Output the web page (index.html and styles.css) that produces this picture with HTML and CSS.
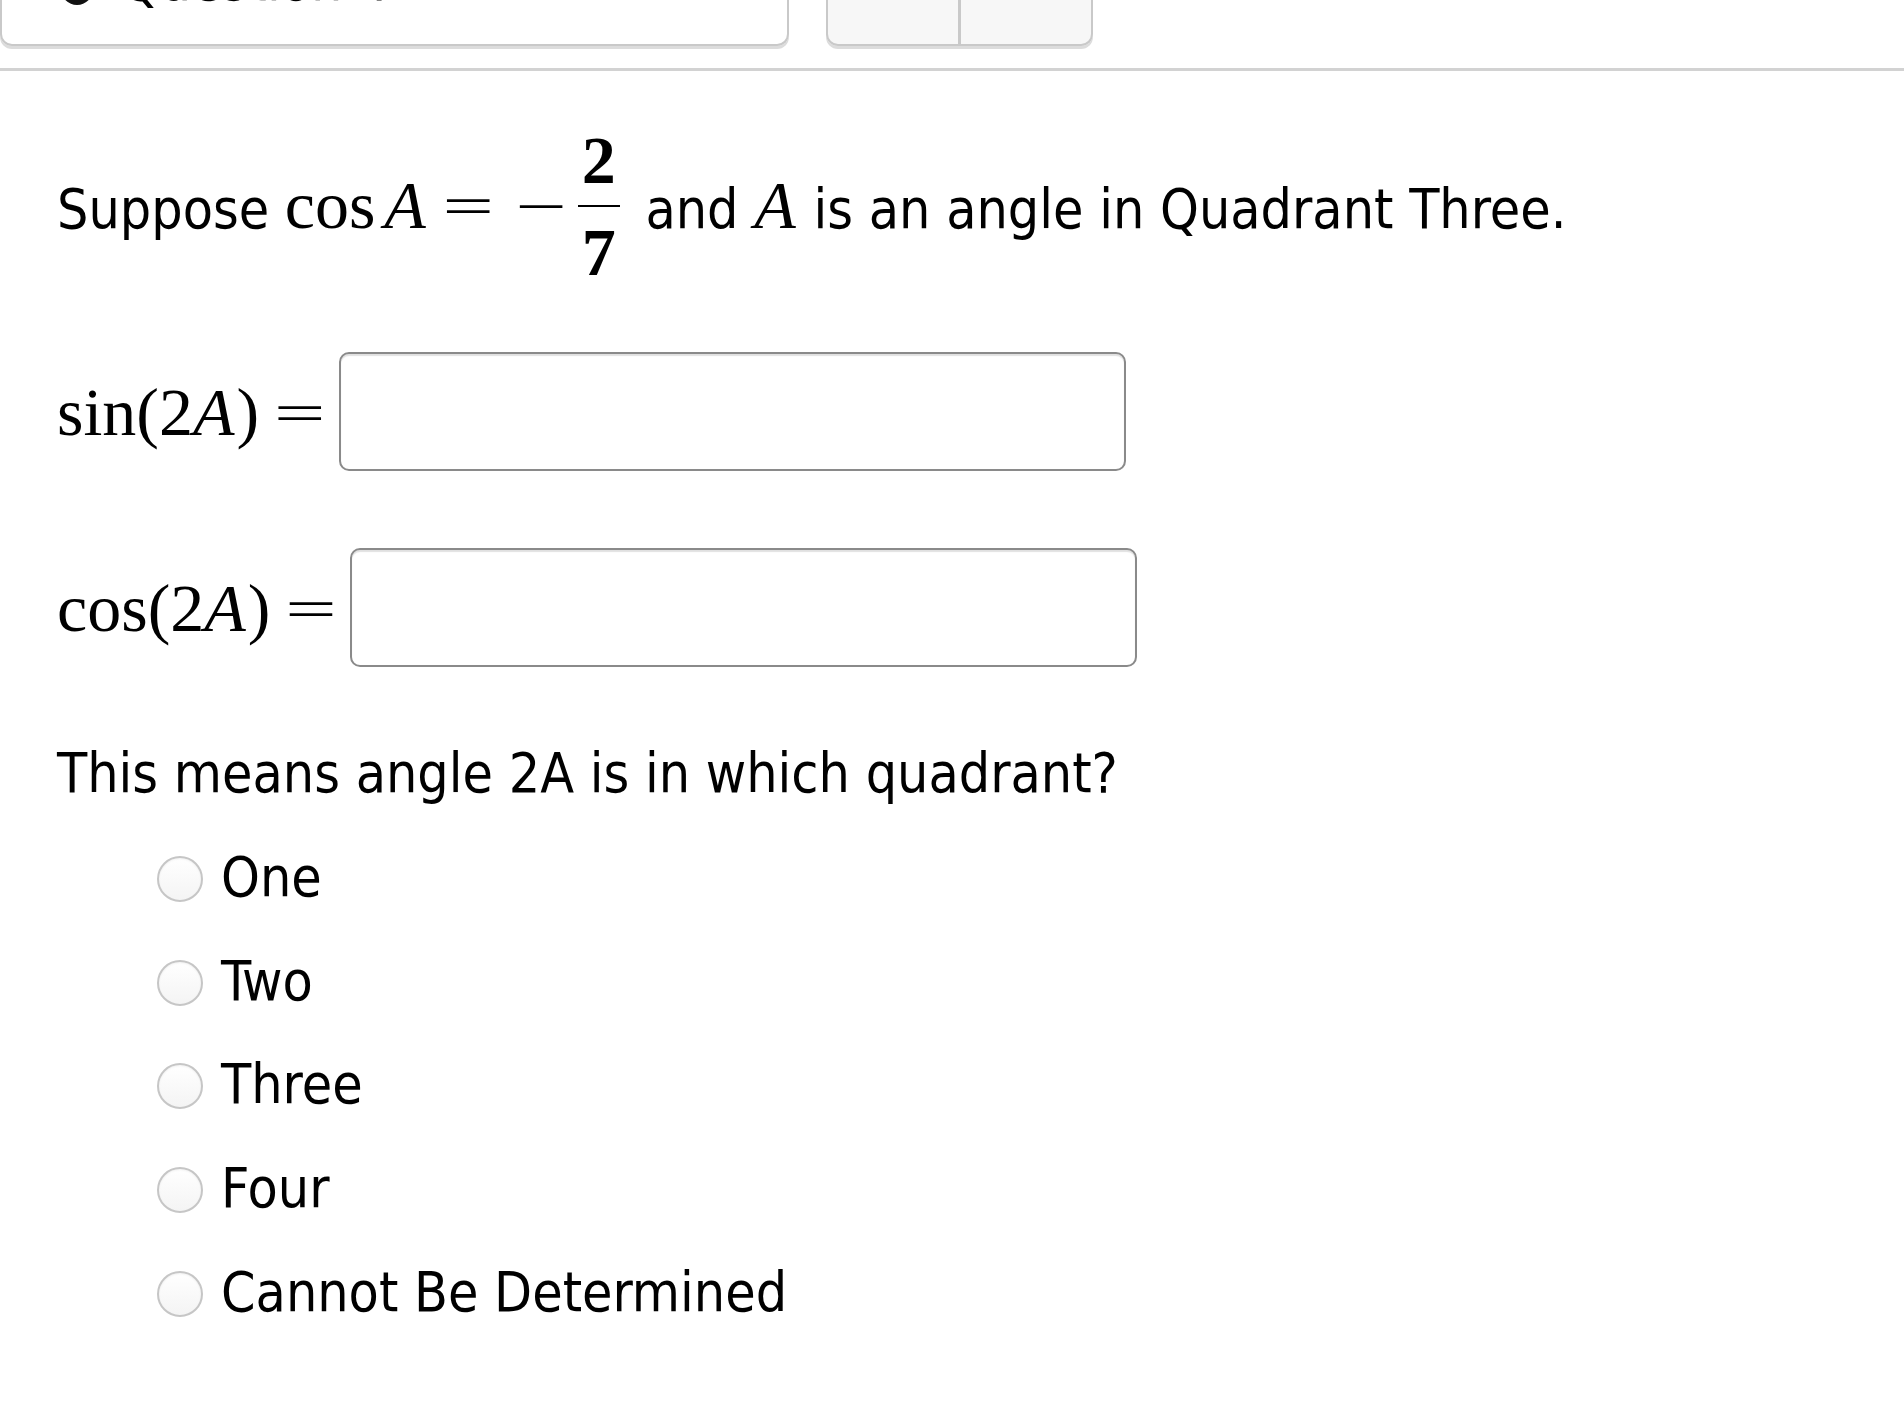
FILE: index.html
```html
<!DOCTYPE html>
<html lang="en">
<head>
    <meta charset="UTF-8">
    <meta name="viewport" content="width=device-width, initial-scale=1.0">
    <title>Question 4</title>
    <link rel="stylesheet" href="styles.css">
</head>
<body>
    <header class="topbar">
        <div class="title-card">
            <div class="title-line">
                <span class="status-icon"></span>
                <span class="title-text">Question 4</span>
            </div>
        </div>
        <div class="pager">
            <button class="pager-btn prev"></button>
            <button class="pager-btn next"></button>
        </div>
    </header>
    <hr class="rule">

    <main class="question">
        <p class="intro">Suppose <span class="math"><span class="mop">cos</span>&#8202;<i class="mi">A</i><span class="rel">=</span><span class="neg">&minus;</span><span class="frac"><span class="num">2</span><span class="den">7</span></span></span> and <span class="math"><i class="mi">A</i></span> is an angle in Quadrant Three.</p>

        <div class="answer-row">
            <span class="math">sin(2<i class="mi">A</i>)<span class="rel">=</span></span>
            <input class="answer-box" type="text">
        </div>
        <div class="answer-row">
            <span class="math">cos(2<i class="mi">A</i>)<span class="rel">=</span></span>
            <input class="answer-box" type="text">
        </div>

        <p class="prompt">This means angle 2A is in which quadrant?</p>
        <div class="choices">
            <label class="choice"><input type="radio" name="quadrant"><span>One</span></label>
            <label class="choice"><input type="radio" name="quadrant"><span>Two</span></label>
            <label class="choice"><input type="radio" name="quadrant"><span>Three</span></label>
            <label class="choice"><input type="radio" name="quadrant"><span>Four</span></label>
            <label class="choice"><input type="radio" name="quadrant"><span>Cannot Be Determined</span></label>
        </div>
    </main>
</body>
</html>
```

FILE: styles.css
```css
body {
    margin: 0;
    font-family: "DejaVu Sans Condensed", "DejaVu Sans", sans-serif;
    font-size: 55px;
    color: #000;
    background: #fff;
}

/* top bar, scrolled so only the bottom of it shows */
.topbar {
    display: flex;
    gap: 37px;
    height: 46px;
}
.title-card {
    width: 789px;
    box-sizing: border-box;
    border: 2px solid #c9c9c9;
    border-top: none;
    border-radius: 0 0 12px 12px;
    box-shadow: 0 3px 0 #dcdcdc;
    overflow: hidden;
}
.title-line {
    display: flex;
    align-items: flex-end;
    gap: 28px;
    height: 55px;
    line-height: 55px;
    margin: -46px 0 0 59px;
}
.status-icon {
    width: 32px;
    height: 32px;
    border-radius: 50%;
    background: #111;
    margin-bottom: 4px;
}
.pager {
    display: flex;
    width: 267px;
    box-shadow: 0 3px 0 #dcdcdc;
    border-radius: 0 0 12px 12px;
}
.pager-btn {
    flex: 1;
    margin: 0;
    padding: 0;
    background: #f7f7f7;
    border: 2px solid #c9c9c9;
    border-top: none;
}
.pager-btn.prev {
    border-right: 3px solid #c9c9c9;
    border-radius: 0 0 0 12px;
}
.pager-btn.next {
    border-left: none;
    border-radius: 0 0 12px 0;
}
.rule {
    margin: 22px 0 0;
    border: none;
    border-top: 3px solid #d2d2d2;
}

.question {
    padding-left: 57px;
}

/* math */
.math {
    font-family: "Liberation Serif", "DejaVu Serif", serif;
    font-size: 68px;
}
.mi {
    font-style: italic;
    padding-right: 2px;
}
.mop {
    padding-right: 3px;
}
.rel {
    font-family: "DejaVu Sans", sans-serif;
    font-weight: 300;
    padding: 0 6px 0 12px;
}
.neg {
    font-family: "DejaVu Sans", sans-serif;
    font-weight: 300;
    padding: 0 8px 0 10px;
}
.frac {
    display: inline-flex;
    flex-direction: column;
    align-items: center;
    vertical-align: 45px;
    line-height: 68px;
    font-weight: bold;
    margin-right: 10px;
}
.frac .num {
    padding: 0 4px 11px;
    border-bottom: 2px solid #000;
}
.frac .den {
    padding-top: 11px;
}

.intro {
    margin: 55px 0 0;
    line-height: 66px;
}

.answer-row {
    display: flex;
    align-items: center;
    height: 119px;
    margin-top: 66px;
}
.answer-row + .answer-row {
    margin-top: 77px;
}
.answer-row .math {
    line-height: normal;
}
.answer-box {
    width: 787px;
    height: 119px;
    box-sizing: border-box;
    margin: 0 0 0 5px;
    border: 2px solid #8a8a8a;
    border-radius: 10px;
    box-shadow: inset 0 2px 1px rgba(0, 0, 0, 0.12);
    background: #fff;
}

.prompt {
    margin: 73px 0 0;
    line-height: 66px;
}

.choices {
    margin-top: 19px;
    padding-left: 100px;
}
.choice {
    display: flex;
    align-items: center;
    gap: 18px;
    height: 103.75px;
    line-height: 66px;
}
.choice input {
    appearance: none;
    -webkit-appearance: none;
    width: 46px;
    height: 46px;
    margin: 4px 0 0;
    border: 2px solid #c6c6c6;
    border-radius: 50%;
    background: linear-gradient(#fff, #f4f4f4);
    box-shadow: inset 0 1px 2px rgba(0, 0, 0, 0.06);
}
```
